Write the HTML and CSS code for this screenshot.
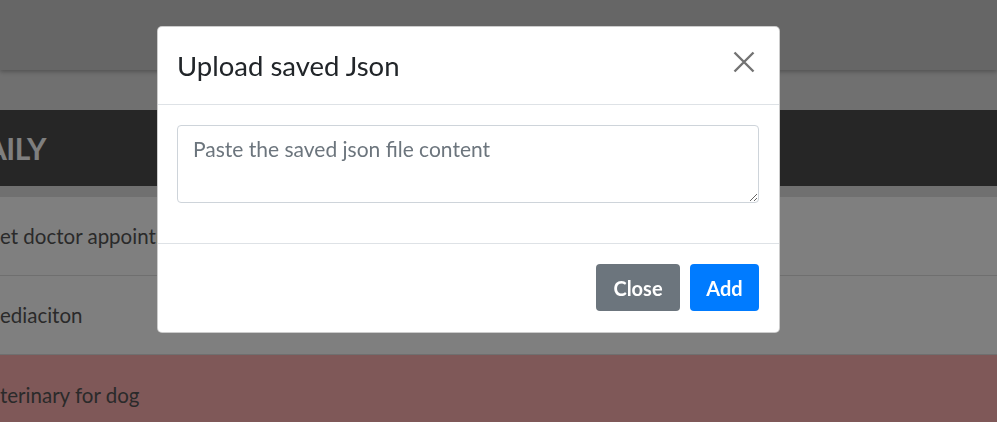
FILE: index.html
```html
<!DOCTYPE html>
<html lang="en">
<head>
<meta charset="utf-8">
<title>Upload saved Json</title>
<link rel="stylesheet" href="styles.css">
</head>
<body>
<div class="page">
  <nav class="navbar"></nav>
  <main class="content">
    <div class="list-head"><h2 class="list-title">AILY</h2></div>
    <ul class="tasks">
      <li class="task">et doctor appointment</li>
      <li class="task">ediaciton</li>
      <li class="task task-danger">terinary for dog</li>
    </ul>
  </main>
</div>
<div class="backdrop"></div>
<div class="modal-wrap">
  <div class="modal">
    <div class="modal-header">
      <h5 class="modal-title">Upload saved Json</h5>
      <button class="close" type="button" aria-label="Close">
        <svg width="22" height="22" viewBox="0 0 22 22"><path d="M1.5 1.5 L20.5 20.5 M20.5 1.5 L1.5 20.5" stroke="#737373" stroke-width="2.4" fill="none"/></svg>
      </button>
    </div>
    <div class="modal-body">
      <textarea class="form-control" placeholder="Paste the saved json file content"></textarea>
    </div>
    <div class="modal-footer">
      <button class="btn btn-secondary" type="button">Close</button>
      <button class="btn btn-primary" type="button">Add</button>
    </div>
  </div>
</div>
</body>
</html>
```
FILE: styles.css
```css
* { box-sizing: border-box; }
html, body { margin: 0; padding: 0; }
body {
  font-family: "Lato", "Open Sans", sans-serif;
  background: #e0e0e0;
  overflow: hidden;
  height: 422px;
}
.page { width: 997px; }
.navbar {
  height: 70px;
  background: #cccccc;
  box-shadow: 0 2px 4px rgba(0,0,0,0.25);
}
.content { padding-top: 40px; }
.list-head {
  height: 76px;
  background: #4c4c4c;
  display: flex;
  align-items: center;
  margin-bottom: 11px;
  overflow: hidden;
}
.list-title {
  margin: 0 0 0 -14px;
  color: #ffffff;
  font-size: 30px;
  font-weight: 700;
  letter-spacing: -0.5px;
}
.tasks { list-style: none; margin: 0; padding: 0; }
.task {
  height: 79px;
  background: #ffffff;
  border-bottom: 1px solid #dedede;
  display: flex;
  align-items: center;
  padding-left: 0;
  color: #555555;
  font-size: 20.5px;
  white-space: nowrap;
}
.task-danger { background: #feb0b0; border-bottom: none; }
.backdrop {
  position: fixed;
  inset: 0;
  background: rgba(0,0,0,0.5);
}
.modal-wrap {
  position: fixed;
  inset: 0;
  padding: 26px 0 0 157px;
}
.modal {
  width: 623px;
  background: #fff;
  border: 1px solid rgba(0,0,0,0.2);
  border-radius: 5px;
}
.modal-header {
  display: flex;
  align-items: center;
  justify-content: space-between;
  height: 78px;
  padding: 0 24px 0 19px;
  border-bottom: 1px solid #dee2e6;
}
.modal-title {
  margin: 0;
  font-size: 27.5px;
  font-weight: 400;
  color: #212529;
}
.close {
  border: 0;
  background: none;
  padding: 0;
  width: 22px;
  height: 22px;
  display: flex;
  margin-top: -7px;
}
.modal-body {
  padding: 20px 20px 40px 19px;
  border-bottom: 1px solid #dee2e6;
}
.form-control {
  display: block;
  width: 582px;
  height: 78px;
  border: 1px solid #ced4da;
  border-radius: 4px;
  padding: 10px 15px;
  font-family: inherit;
  font-size: 21px;
  color: #495057;
  resize: vertical;
  margin: 0;
}
.form-control::placeholder { color: #6c757d; opacity: 1; }
.modal-footer {
  display: flex;
  justify-content: flex-end;
  gap: 10px;
  padding: 20px 20px 21px 20px;
}
.btn {
  border: 0;
  border-radius: 4px;
  height: 47px;
  padding: 0 16px;
  color: #fff;
  font-family: inherit;
  font-size: 20px;
  font-weight: 700;
}
.btn-secondary { background: #6c757d; width: 84px; }
.btn-primary { background: #007bff; width: 69px; }
```
